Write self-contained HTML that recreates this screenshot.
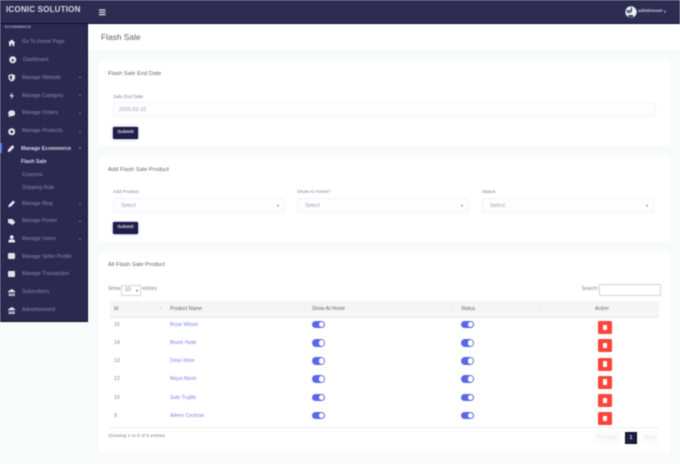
<!DOCTYPE html>
<html><head><meta charset="utf-8"><style>
*{box-sizing:border-box}
html,body{margin:0;padding:0;width:680px;height:464px;overflow:hidden;background:#f9fbfa}
body{font-family:"Liberation Sans",sans-serif;color:#6c757d;position:relative}
#w{position:absolute;left:0;top:0;width:680px;height:464px;filter:blur(.45px)}
.a{position:absolute;white-space:nowrap;line-height:1}
.top{position:absolute;left:0;top:0;width:680px;height:24px;background:#2e2c52;border-bottom:1px solid #100f33}
.side{position:absolute;left:0;top:24px;width:88px;height:298px;background:#2b2950;border-right:1px solid #0e0d30;border-bottom:1px solid #0e0d30}
.m{font-size:5.2px;color:#8d8ca6;margin-top:.7px}
.i{position:absolute;left:7.5px;width:7.5px;height:7.5px}
.c{position:absolute;border-top:1.6px solid #b4b3c6;border-left:1.6px solid transparent;border-right:1.6px solid transparent;width:0;height:0;left:78.5px;margin-top:.5px}
.card{position:absolute;left:99px;width:571px;background:#fff;border-radius:2px;box-shadow:0 0 2px rgba(215,222,218,.12)}
.h{font-size:5.8px;color:#5d6470;margin-top:1.5px}
.l{font-size:4.7px;color:#7c838b;margin-top:.4px}
.inp{position:absolute;height:15px;background:#fdfdff;border:1px solid #f4f4fb;border-radius:2px;font-size:5.3px;color:#9a9fa6;line-height:14px;padding-left:7px}
.inp i{position:absolute;right:5px;top:6px;border-top:2px solid #777;border-left:1.5px solid transparent;border-right:1.5px solid transparent}
.btn{position:absolute;left:113px;width:25px;height:11.5px;background:#211f4a;border:1px solid #14133a;box-shadow:0 0 2px #7a7ae0;border-radius:1px;color:#ddd;font-size:4.8px;font-weight:bold;text-align:center;line-height:10px}
.tg{position:absolute;width:13px;height:7.5px;border-radius:4px;background:#5b67e6}
.tg:after{content:"";position:absolute;right:1px;top:1px;width:5.5px;height:5.5px;border-radius:50%;background:#fff}
.del{position:absolute;left:598px;width:14px;height:13px;background:#fc4438;border-radius:1.5px}
.del:after{content:"";position:absolute;left:5px;top:3.5px;width:4px;height:5.5px;background:#fff;border-radius:.5px}
.t{font-size:5.2px;color:#7f868d;margin-top:1px}
.n{font-size:5px;color:#7d83e2;margin-top:1px}
.th{font-size:5px;color:#5f6670}
.s{position:absolute;width:2px;height:5px;color:#ccc;font-size:4px;line-height:2.5px}
</style></head><body><div id="w">

<div class="top"></div>
<div class="a" style="left:6px;top:6px;font-size:8px;font-weight:bold;color:#d6d6e2;letter-spacing:.2px">ICONIC SOLUTION</div>
<svg class="a" style="left:99px;top:9px" width="7" height="7" viewBox="0 0 7 7"><path d="M0 1h6.5M0 3.3h6.5M0 5.6h6.5" stroke="#e4e4ea" stroke-width="1.2"/></svg>
<svg class="a" style="left:625px;top:6px" width="12" height="12" viewBox="0 0 12 12"><circle cx="6" cy="6" r="5.700" fill="#eef1f4"/><path d="M1 4h5v3H2z" fill="#4f6f96"/><path d="M6 .4a5.700 5.700 0 0 1 0 6.400z" fill="#1e2140"/><path d="M3 9h5v2.400H4z" fill="#31415f"/></svg>
<div class="a" style="left:638px;top:9.500px;font-size:4.900px;font-weight:bold;color:#c9c9d6">adminuser</div>
<div class="a" style="left:664px;top:11px;width:0;height:0;border-top:2px solid #d8d8e0;border-left:1.500px solid transparent;border-right:1.500px solid transparent"></div>

<div class="side"></div>
<div class="a" style="left:5px;top:25.500px;font-size:3.700px;font-weight:bold;color:#a9a9bc;letter-spacing:.2px">ECOMMERCE</div>

<svg class="i" style="top:39px" viewBox="0 0 8 8"><path d="M4 .5 0 4h1.200v3.500h2V5h1.600v2.500h2V4H8z" fill="#e8e8f0"/></svg>
<div class="a m" style="left:22px;top:39.500px">Go To Home Page</div>
<svg class="i" style="top:56px;left:9px" viewBox="0 0 8 8"><circle cx="4" cy="4" r="3.800" fill="#e2e2ea"/><circle cx="4" cy="4.500" r="1.200" fill="#2b2950"/></svg>
<div class="a m" style="left:23px;top:57.500px">Dashboard</div>
<svg class="i" style="top:74px" viewBox="0 0 8 8"><path d="M4 0 .5 1.200v3C.5 6 2.500 7.500 4 8c1.500-.5 3.500-2 3.500-3.800v-3z" fill="#e2e2ea"/><path d="M4 1.500v5C3 6 2 5 2 4V2.200z" fill="#2b2950"/></svg>
<div class="a m" style="left:22px;top:75px">Manage Website</div><div class="c" style="top:76.500px"></div>
<svg class="i" style="top:92px" viewBox="0 0 8 8"><path d="M5 0 1.500 4.500H4L3 8l3.500-4.500H4z" fill="#e2e2ea"/></svg>
<div class="a m" style="left:22px;top:93px">Manage Category</div><div class="c" style="top:94.500px"></div>
<svg class="i" style="top:109.500px" viewBox="0 0 8 8"><ellipse cx="4" cy="3.500" rx="3.900" ry="3.200" fill="#e2e2ea"/><path d="M1 5.500 .5 8 3.500 6.500z" fill="#e2e2ea"/></svg>
<div class="a m" style="left:22px;top:110.500px">Manage Orders</div><div class="c" style="top:112px"></div>
<svg class="i" style="top:127.500px" viewBox="0 0 8 8"><circle cx="4" cy="4" r="3.800" fill="#e2e2ea"/><circle cx="4" cy="4" r="1.400" fill="#2b2950"/></svg>
<div class="a m" style="left:22px;top:128.500px">Manage Products</div><div class="c" style="top:130px"></div>

<div class="a" style="left:0;top:143px;width:2px;height:10px;background:#4f6fe8"></div>
<svg class="i" style="top:145px;left:7px" viewBox="0 0 8 8"><path d="M1 5 5 .8c1.500-.8 3 .8 2.200 2.200L3 7.200C1.500 8 .2 6.500 1 5z" fill="#e2e2ea"/></svg>
<div class="a" style="left:21px;top:146.700px;font-size:5.200px;font-weight:bold;color:#d8d8e6">Manage Ecommerce</div><div class="c" style="top:147.500px;border-top-color:#eee"></div>
<div class="a" style="left:21px;top:160.300px;font-size:5.200px;font-weight:bold;color:#d4d4e2">Flash Sale</div>
<div class="a m" style="left:22px;top:172.500px">Coupons</div>
<div class="a m" style="left:22px;top:185px">Shipping Rule</div>

<svg class="i" style="top:199.500px" viewBox="0 0 8 8"><path d="M0 8 1 5 5.500.5 7.500 2.500 3 7z" fill="#e8e8f0"/></svg>
<div class="a m" style="left:22px;top:201px">Manage Blog</div><div class="c" style="top:202.500px"></div>
<svg class="i" style="top:217.500px" viewBox="0 0 8 8"><path d="M0 1h4.500L8 4.500 5 7.500 0 5z" fill="#e2e2ea"/></svg>
<div class="a m" style="left:22px;top:218.500px">Manage Footer</div><div class="c" style="top:220px"></div>
<svg class="i" style="top:235px" viewBox="0 0 8 8"><circle cx="4" cy="2.200" r="2" fill="#e8e8f0"/><path d="M.5 8V6.300C.5 5 2 4.700 4 4.700s3.500.3 3.500 1.600V8z" fill="#e8e8f0"/></svg>
<div class="a m" style="left:22px;top:236.500px">Manage Users</div><div class="c" style="top:238px"></div>
<div class="a" style="left:8px;top:253px;width:7px;height:5.500px;background:#e2e2ea;border-radius:1px"></div>
<div class="a m" style="left:22px;top:254px">Manage Seller Profile</div>
<div class="a" style="left:8px;top:271px;width:7px;height:5.500px;background:#e2e2ea;border-radius:1px"></div>
<div class="a m" style="left:22px;top:271.500px">Manage Transaction</div>
<svg class="i" style="top:288.500px" viewBox="0 0 8 8"><path d="M4 0 0 2.500v1h8v-1zM1 4.500h1.500V7H1zM5.500 4.500H7V7H5.500zM0 7h8v1H0zM3.300 4.500h1.400V7H3.300z" fill="#e2e2ea"/></svg>
<div class="a m" style="left:22px;top:289.500px">Subscribers</div>
<svg class="i" style="top:306.500px" viewBox="0 0 8 8"><path d="M4 0 0 2.500v1h8v-1zM1 4.500h1.500V7H1zM5.500 4.500H7V7H5.500zM0 7h8v1H0zM3.300 4.500h1.400V7H3.300z" fill="#e2e2ea"/></svg>
<div class="a m" style="left:22px;top:307.500px">Advertisement</div>

<!-- header -->
<div class="a" style="left:88px;top:24px;width:592px;height:26px;background:#fff"></div>
<div class="a" style="left:101px;top:33px;font-size:8.400px;color:#5b626c">Flash Sale</div>

<!-- card 1 -->
<div class="card" style="top:60px;height:86px"></div>
<div class="a h" style="left:108px;top:70px">Flash Sale End Date</div>
<div class="a l" style="left:113px;top:94.500px">Sale End Date</div>
<div class="inp" style="left:113px;top:102px;width:543px;padding-left:5px">2025-02-10</div>
<div class="btn" style="top:127px">Submit</div>

<!-- card 2 -->
<div class="card" style="top:156px;height:86px"></div>
<div class="a h" style="left:108px;top:166px">Add Flash Sale Product</div>
<div class="a l" style="left:113px;top:189.500px">Add Product</div>
<div class="inp" style="left:113px;top:198px;width:172px">Select<i></i></div>
<div class="a l" style="left:297px;top:189.500px">Show At Home?</div>
<div class="inp" style="left:297px;top:198px;width:172px">Select<i></i></div>
<div class="a l" style="left:482px;top:189.500px">Status</div>
<div class="inp" style="left:482px;top:198px;width:172px">Select<i></i></div>
<div class="btn" style="top:222px">Submit</div>

<!-- card 3 -->
<div class="card" style="top:252px;height:201px"></div>
<div class="a h" style="left:108px;top:261.500px">All Flash Sale Product</div>
<div class="a l" style="left:108px;top:287.100px;font-size:5px">Show</div>
<div class="a" style="left:121px;top:284.500px;width:20px;height:11px;border:1px solid #d5d5d5;border-radius:1px;font-size:5.200px;line-height:9px;padding-left:3px;color:#777;background:#fff">10<span class="a" style="left:14px;top:4px;width:0;height:0;border-top:2px solid #555;border-left:1.500px solid transparent;border-right:1.500px solid transparent"></span></div>
<div class="a l" style="left:142px;top:287.100px;font-size:5px">entries</div>
<div class="a l" style="left:581.500px;top:287.100px;font-size:5px">Search:</div>
<div class="a" style="left:599px;top:284px;width:62px;height:12px;border:1px solid #d5d5d5;border-radius:1px;background:#fff"></div>

<div class="a" style="left:110px;top:301px;width:549px;height:17px;background:#f5f5f5;border-bottom:1px solid #e8e8e8"></div>
<div class="a th" style="left:114px;top:306.500px">Id</div>
<div class="a th" style="left:170px;top:306.500px">Product Name</div>
<div class="a th" style="left:312px;top:306.500px">Show At Home</div>
<div class="a th" style="left:461px;top:306.500px">Status</div>
<div class="a th" style="left:595px;top:306.500px">Action</div>
<div class="s a" style="left:159.500px;top:307px;color:#888">↓</div>
<div class="s a" style="left:302.500px;top:306.500px">↕</div>
<div class="s a" style="left:451px;top:306.500px">↕</div>
<div class="s a" style="left:538.500px;top:306.500px">↕</div>

<div class="a t" style="left:114px;top:321.500px">16</div><div class="a n" style="left:170px;top:321.500px">Bryar Wilson</div>
<div class="a t" style="left:114px;top:339.500px">14</div><div class="a n" style="left:170px;top:339.500px">Bruno Hyde</div>
<div class="a t" style="left:114px;top:358px">13</div><div class="a n" style="left:170px;top:358px">Dean Kline</div>
<div class="a t" style="left:114px;top:376px">12</div><div class="a n" style="left:170px;top:376px">Maya Nixon</div>
<div class="a t" style="left:114px;top:394.500px">10</div><div class="a n" style="left:170px;top:394.500px">Sule Trujillo</div>
<div class="a t" style="left:114px;top:412.500px">9</div><div class="a n" style="left:170px;top:412.500px">Aileen Cochran</div>

<div class="tg" style="left:312px;top:320.500px"></div><div class="tg" style="left:461px;top:320.500px"></div><div class="del" style="top:321px"></div>
<div class="tg" style="left:312px;top:339px"></div><div class="tg" style="left:461px;top:339px"></div><div class="del" style="top:339px"></div>
<div class="tg" style="left:312px;top:357px"></div><div class="tg" style="left:461px;top:357px"></div><div class="del" style="top:357.500px"></div>
<div class="tg" style="left:312px;top:375px"></div><div class="tg" style="left:461px;top:375px"></div><div class="del" style="top:375.500px"></div>
<div class="tg" style="left:312px;top:393.500px"></div><div class="tg" style="left:461px;top:393.500px"></div><div class="del" style="top:394px"></div>
<div class="tg" style="left:312px;top:411.500px"></div><div class="tg" style="left:461px;top:411.500px"></div><div class="del" style="top:412px"></div>

<div class="a" style="left:110px;top:427px;width:549px;height:1px;background:#eee"></div>
<div class="a l" style="left:108px;top:434.500px;font-size:4.800px">Showing 1 to 6 of 6 entries</div>
<div class="a" style="left:594px;top:432px;width:27px;height:12px;background:#fbfbfd;font-size:5px;color:#e4e4e8;text-align:center;line-height:12px">Previous</div>
<div class="a" style="left:625px;top:432px;width:12px;height:12px;background:#1f1d48;border:1px solid #111;color:#ddd;font-size:5px;font-weight:bold;text-align:center;line-height:10px">1</div>
<div class="a" style="left:641px;top:432px;width:18px;height:12px;background:#fbfbfd;font-size:5px;color:#e4e4e8;text-align:center;line-height:12px">Next</div>

</div></body></html>
